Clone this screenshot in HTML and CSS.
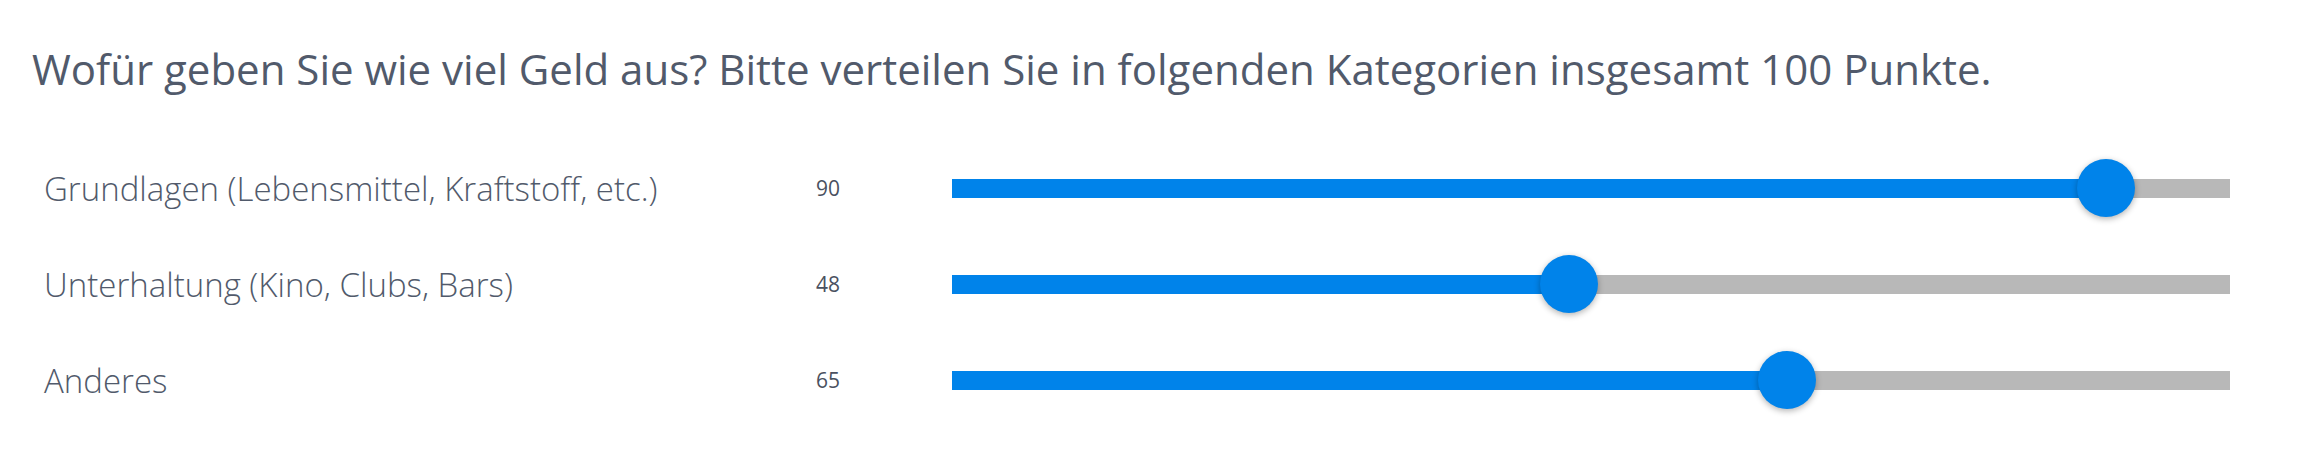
FILE: index.html
```html
<!DOCTYPE html>
<html lang="de">
<head>
    <meta charset="UTF-8">
    <meta name="viewport" content="width=device-width, initial-scale=1.0">
    <title>Punkteverteilung</title>
    <link rel="stylesheet" href="styles.css">
</head>
<body>
    <div class="question">
        <h2 class="question-title">Wofür geben Sie wie viel Geld aus? Bitte verteilen Sie in folgenden Kategorien insgesamt 100 Punkte.</h2>

        <div class="slider-list">
            <div class="slider-row">
                <span class="slider-label">Grundlagen (Lebensmittel, Kraftstoff, etc.)</span>
                <span class="slider-value">90</span>
                <div class="slider-track">
                    <div class="slider-fill" style="width: 90%"></div>
                    <div class="slider-thumb" style="left: 90%"></div>
                </div>
            </div>
            <div class="slider-row">
                <span class="slider-label">Unterhaltung (Kino, Clubs, Bars)</span>
                <span class="slider-value">48</span>
                <div class="slider-track">
                    <div class="slider-fill" style="width: 48%"></div>
                    <div class="slider-thumb" style="left: 48%"></div>
                </div>
            </div>
            <div class="slider-row">
                <span class="slider-label">Anderes</span>
                <span class="slider-value">65</span>
                <div class="slider-track">
                    <div class="slider-fill" style="width: 65%"></div>
                    <div class="slider-thumb" style="left: 65%"></div>
                </div>
            </div>
        </div>
    </div>
</body>
</html>
```

FILE: styles.css
```css
:root {
    --text-color: #515a6b;
    --value-color: #4a5160;
    --accent: #0083ea;
    --track-bg: #b8b8b8;
}

body {
    margin: 0;
    background: #fff;
    font-family: "Open Sans", "Noto Sans", sans-serif;
    color: var(--text-color);
}

.question {
    padding: 43px 76px 0 32px;
}

.question-title {
    margin: 0;
    font-size: 42px;
    font-weight: 400;
    line-height: 52px;
}

.slider-list {
    margin-top: 45px;
    padding-left: 12px;
}

.slider-row {
    display: grid;
    grid-template-columns: 772px 136px 1fr;
    align-items: center;
    height: 96px;
}

.slider-label {
    font-size: 33px;
    font-weight: 300;
}

.slider-value {
    font-size: 21px;
    font-weight: 400;
    color: var(--value-color);
}

.slider-track {
    position: relative;
    height: 19px;
    background: var(--track-bg);
}

.slider-fill {
    height: 100%;
    background: var(--accent);
}

/* round handle sits over the track */
.slider-thumb {
    position: absolute;
    top: 50%;
    width: 58px;
    height: 58px;
    margin-left: 4px;
    border-radius: 50%;
    background: var(--accent);
    box-shadow: 0 2px 6px rgba(0, 0, 0, 0.3);
    transform: translate(-50%, -50%);
}
```
